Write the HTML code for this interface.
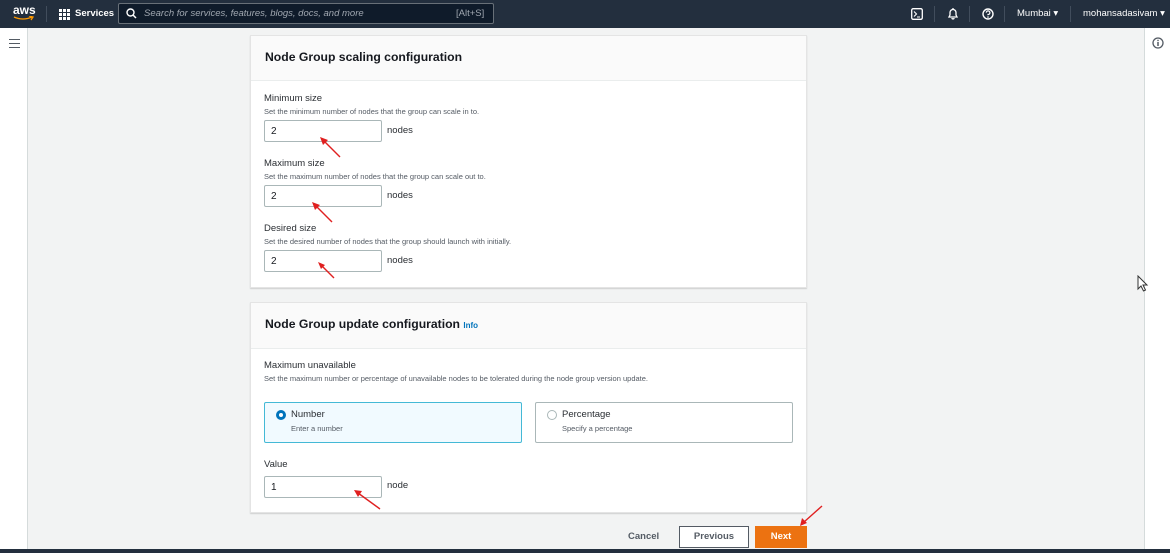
<!DOCTYPE html>
<html><head><meta charset="utf-8"><style>
*{box-sizing:border-box;margin:0;padding:0}
body{width:1170px;height:553px;overflow:hidden;background:#f2f3f3;font-family:"Liberation Sans",sans-serif;position:relative;color:#16191f}
.a{position:absolute}
.nav{left:0;top:0;width:1170px;height:28px;background:#232f3e}
.nt{color:#fff;font-size:10px}
.card{background:#fff;border:1px solid #e4e4e4;box-shadow:0 1px 1px rgba(0,0,0,.15)}
.hd{background:#fafafa;border-bottom:1px solid #eaeded}
h2{font-size:12.2px;font-weight:bold;color:#16191f}
.lb{font-size:9.5px;color:#2a2e33}
.ds{font-size:7.5px;color:#545b64}
.in{width:118px;height:22px;border:1px solid #aab7b8;border-radius:2px;font-size:10px;padding:5px 6px;background:#fff}
.un{font-size:9.5px;color:#2a2e33}
.arrow{stroke:#e02020;stroke-width:1.4;fill:none}
.hd2{fill:#e02020}
</style></head><body>
<div class="a nav"></div>
<div class="a nt" style="left:13px;top:3px;font-size:12px;font-weight:bold">aws</div>
<svg class="a" style="left:13px;top:16px" width="22" height="6"><path d="M1 1 Q10 5 19 1 M16 0 L20 1 L18 4" stroke="#f90" stroke-width="1.3" fill="none"/></svg>
<div class="a" style="left:46px;top:6px;width:1px;height:16px;background:#414d5c"></div>
<svg class="a" style="left:59px;top:9px" width="11" height="11" fill="#fff"><rect x="0" y="0" width="3" height="3"/><rect x="4" y="0" width="3" height="3"/><rect x="8" y="0" width="3" height="3"/><rect x="0" y="4" width="3" height="3"/><rect x="4" y="4" width="3" height="3"/><rect x="8" y="4" width="3" height="3"/><rect x="0" y="8" width="3" height="3"/><rect x="4" y="8" width="3" height="3"/><rect x="8" y="8" width="3" height="3"/></svg>
<div class="a nt" style="left:75px;top:8px;font-size:9.5px;font-weight:bold">Services</div>
<div class="a" style="left:118px;top:3px;width:376px;height:21px;border:1px solid #687078;background:#0f1b2a;border-radius:2px"></div>
<svg class="a" style="left:126px;top:8px" width="11" height="11"><circle cx="4.5" cy="4.5" r="3.5" stroke="#fff" stroke-width="1.4" fill="none"/><path d="M7 7 L10 10" stroke="#fff" stroke-width="1.5"/></svg>
<div class="a" style="left:144px;top:8px;font-size:9.5px;font-style:italic;color:#a0a7b0">Search for services, features, blogs, docs, and more</div>
<div class="a" style="left:456px;top:8px;font-size:9.5px;color:#a0a7b0">[Alt+S]</div>
<svg class="a" style="left:911px;top:8px" width="12" height="12"><rect x="0.7" y="0.7" width="10.6" height="10.6" rx="1.5" stroke="#fff" stroke-width="1.3" fill="none"/><path d="M3 3.5 L5.5 6 L3 8.5 M6 9 H9" stroke="#fff" stroke-width="1.1" fill="none"/></svg>
<div class="a" style="left:934px;top:6px;width:1px;height:16px;background:#414d5c"></div>
<svg class="a" style="left:947px;top:7px" width="12" height="13"><path d="M2 10 H10 L9 8 V5.5 A3 3 0 0 0 3 5.5 V8 Z M5 11 A1 1 0 0 0 7 11 M6 1 V2.5" stroke="#fff" stroke-width="1.3" fill="none"/></svg>
<div class="a" style="left:969px;top:6px;width:1px;height:16px;background:#414d5c"></div>
<svg class="a" style="left:982px;top:8px" width="12" height="12"><circle cx="6" cy="6" r="5" stroke="#fff" stroke-width="1.4" fill="none"/><path d="M4.3 4.6 A1.8 1.8 0 1 1 6 6.5 V7.3" stroke="#fff" stroke-width="1.2" fill="none"/><circle cx="6" cy="9" r=".8" fill="#fff"/></svg>
<div class="a" style="left:1004px;top:6px;width:1px;height:16px;background:#414d5c"></div>
<div class="a nt" style="left:1017px;top:8px;font-size:9.5px">Mumbai ▾</div>
<div class="a" style="left:1070px;top:6px;width:1px;height:16px;background:#414d5c"></div>
<div class="a nt" style="left:1083px;top:8px;font-size:9.5px">mohansadasivam ▾</div>
<div class="a" style="left:0;top:28px;width:28px;height:525px;background:#fff;border-right:1px solid #d5dbdb"></div>
<div class="a" style="left:9px;top:39px;width:11px;height:9px;border-top:1.5px solid #545b64;border-bottom:1.5px solid #545b64"><div style="margin-top:2.5px;height:1.5px;background:#545b64"></div></div>
<div class="a" style="left:1144px;top:28px;width:26px;height:525px;background:#fff;border-left:1px solid #d5dbdb"></div>
<svg class="a" style="left:1152px;top:37px" width="12" height="12"><circle cx="6" cy="6" r="5" stroke="#545b64" stroke-width="1.3" fill="none"/><path d="M6 5 V9" stroke="#545b64" stroke-width="1.5"/><circle cx="6" cy="3.4" r=".8" fill="#545b64"/></svg>
<svg class="a" style="left:1137px;top:275px" width="12" height="18"><path d="M1 1 V14 L4 11 L6.5 16 L8.5 15 L6 10 H10 Z" fill="#fff" stroke="#333" stroke-width="1"/></svg>

<div class="a card" style="left:250px;top:35px;width:557px;height:253px">
 <div class="hd" style="height:45px;padding:14px 14px"><h2>Node Group scaling configuration</h2></div>
</div>
<div class="a lb" style="left:264px;top:93px">Minimum size</div>
<div class="a ds" style="left:264px;top:107px">Set the minimum number of nodes that the group can scale in to.</div>
<div class="a in" style="left:264px;top:120px">2</div><div class="a un" style="left:387px;top:125px">nodes</div>
<div class="a lb" style="left:264px;top:158px">Maximum size</div>
<div class="a ds" style="left:264px;top:172px">Set the maximum number of nodes that the group can scale out to.</div>
<div class="a in" style="left:264px;top:185px">2</div><div class="a un" style="left:387px;top:190px">nodes</div>
<div class="a lb" style="left:264px;top:223px">Desired size</div>
<div class="a ds" style="left:264px;top:237px">Set the desired number of nodes that the group should launch with initially.</div>
<div class="a in" style="left:264px;top:250px">2</div><div class="a un" style="left:387px;top:255px">nodes</div>

<div class="a card" style="left:250px;top:302px;width:557px;height:211px">
 <div class="hd" style="height:46px;padding:14px 14px"><h2>Node Group update configuration <span style="font-size:8px;color:#0073bb">Info</span></h2></div>
</div>
<div class="a lb" style="left:264px;top:360px">Maximum unavailable</div>
<div class="a ds" style="left:264px;top:374px">Set the maximum number or percentage of unavailable nodes to be tolerated during the node group version update.</div>
<div class="a" style="left:264px;top:402px;width:258px;height:41px;border:1px solid #44b9d6;background:#f1faff;border-radius:2px"></div>
<div class="a" style="left:276px;top:410px;width:10px;height:10px;border-radius:50%;border:3px solid #0073bb;background:#fff"></div>
<div class="a lb" style="left:291px;top:409px">Number</div>
<div class="a ds" style="left:291px;top:424px">Enter a number</div>
<div class="a" style="left:535px;top:402px;width:258px;height:41px;border:1px solid #aab7b8;background:#fff;border-radius:2px"></div>
<div class="a" style="left:547px;top:410px;width:10px;height:10px;border-radius:50%;border:1px solid #aab7b8"></div>
<div class="a lb" style="left:562px;top:409px">Percentage</div>
<div class="a ds" style="left:562px;top:424px">Specify a percentage</div>
<div class="a lb" style="left:264px;top:459px">Value</div>
<div class="a in" style="left:264px;top:476px">1</div><div class="a un" style="left:387px;top:480px">node</div>

<div class="a" style="left:628px;top:531px;font-size:9.5px;font-weight:bold;color:#545b64">Cancel</div>
<div class="a" style="left:679px;top:526px;width:70px;height:22px;border:1px solid #545b64;background:#fff;font-size:9.5px;font-weight:bold;color:#545b64;text-align:center;line-height:20px">Previous</div>
<div class="a" style="left:755px;top:526px;width:52px;height:22px;background:#ec7211;font-size:9.5px;font-weight:bold;color:#fff;text-align:center;line-height:22px">Next</div>
<div class="a" style="left:0;top:549px;width:1170px;height:4px;background:#232f3e"></div>

<svg class="a" style="left:0;top:0" width="1170" height="553">
<g class="arrow">
<path d="M340 157 L324 141"/><path d="M332 222 L316 206"/><path d="M334 278 L321 265"/><path d="M380 509 L358 493"/><path d="M822 506 L804 522"/>
</g>
<g class="hd2">
<path d="M320 137 L328 140 L323 145 Z"/>
<path d="M312 202 L320 205 L315 210 Z"/>
<path d="M318 262 L325 265 L321 269 Z"/>
<path d="M354 490 L362 491 L358 497 Z"/>
<path d="M800 526 L802 518 L807 523 Z"/>
</g></svg>
</body></html>
